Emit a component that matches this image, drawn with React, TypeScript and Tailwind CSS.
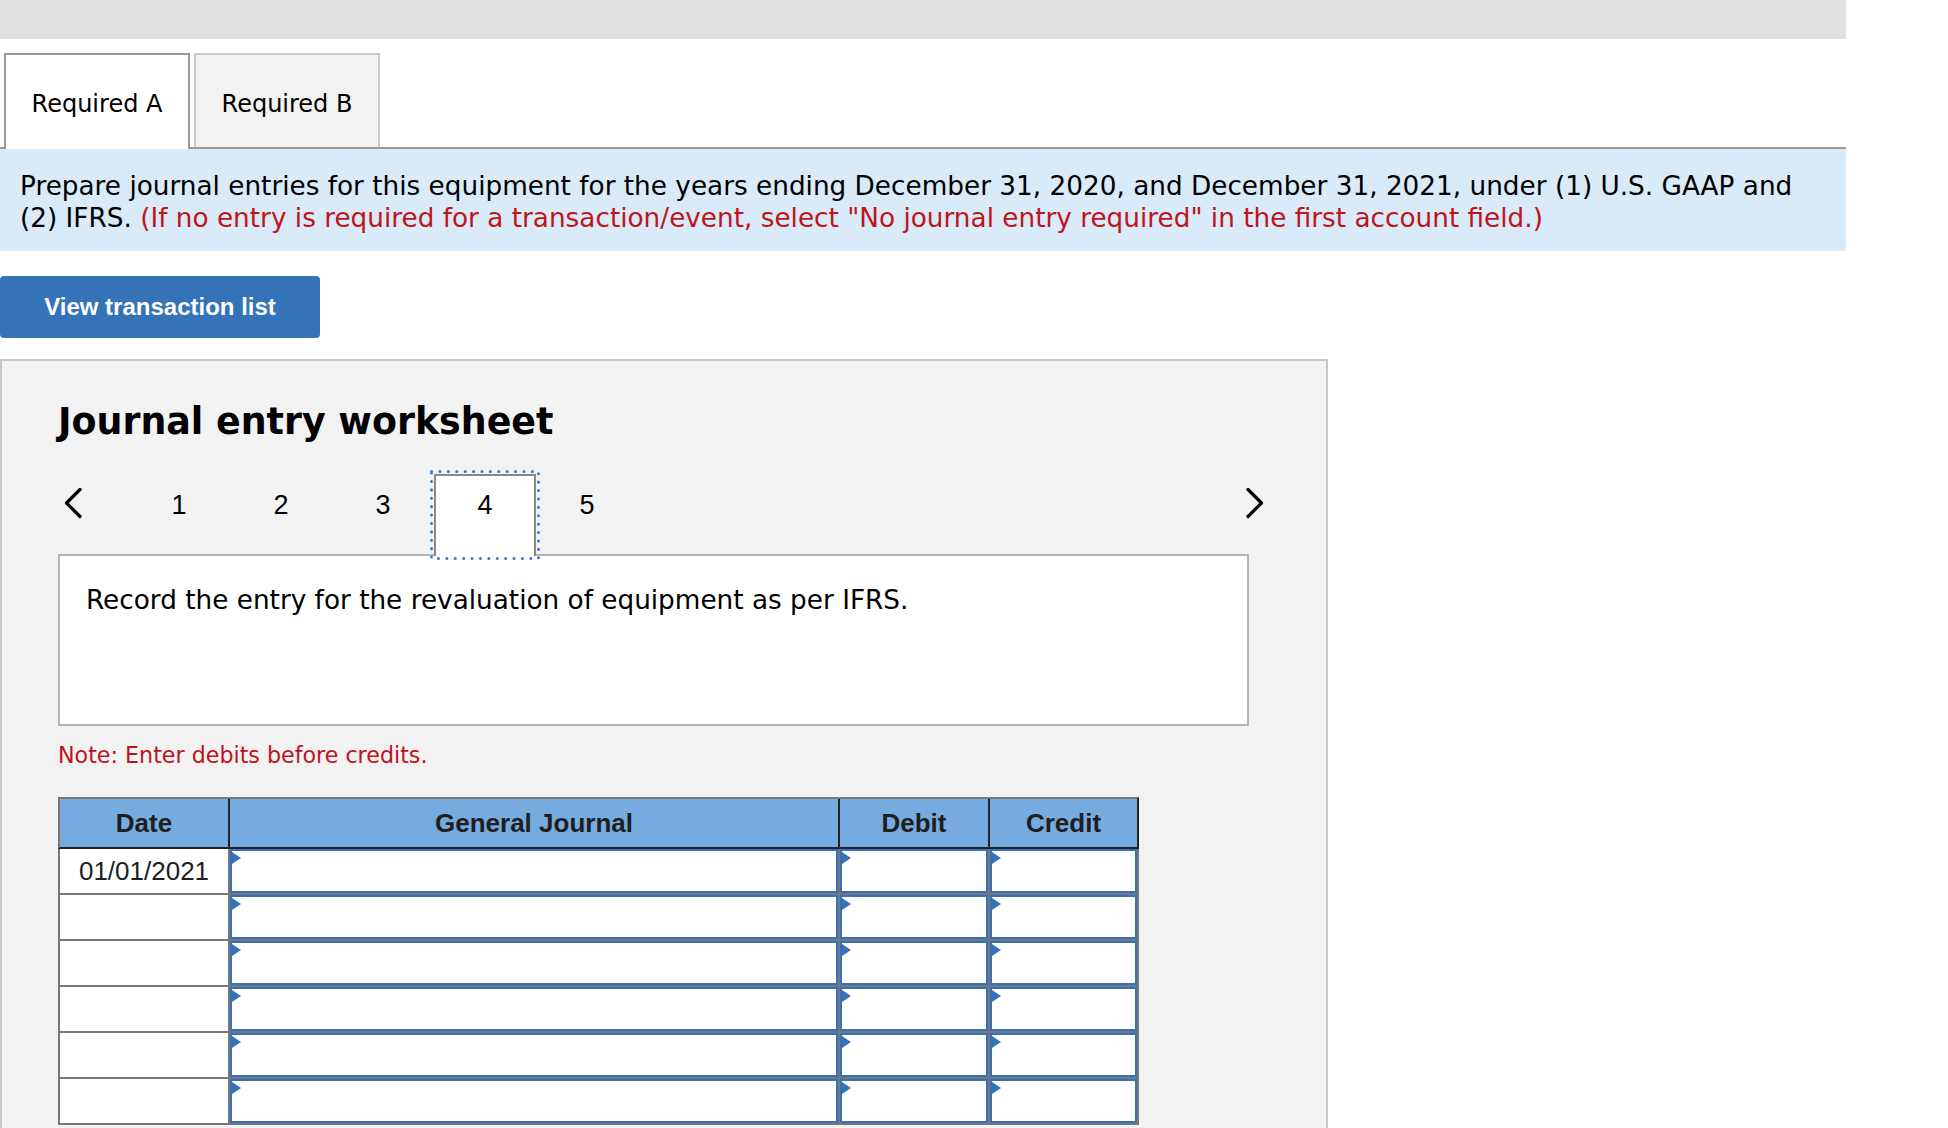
const verdana = "font-['DejaVu_Sans',Verdana,sans-serif]";
const arial = "font-['Liberation_Sans',Arial,sans-serif]";

const steps = [1, 2, 3, 4, 5];
const rows = ["01/01/2021", "", "", "", "", ""];

function Chevron({ dir }: { dir: "left" | "right" }) {
  const d = dir === "left" ? "M18 2.5 L4.5 16 L18 29.5" : "M4 2.5 L17.5 16 L4 29.5";
  return (
    <svg width="22" height="32" viewBox="0 0 22 32" fill="none" className="shrink-0">
      <path d={d} stroke="#000" strokeWidth="3.2" strokeLinecap="round" strokeLinejoin="round" />
    </svg>
  );
}

function EntryInput() {
  return (
    <div className="relative h-full border-2 border-[#3572b8] bg-white">
      <span className="absolute left-0 top-[1px] h-0 w-0 border-y-[6px] border-l-[9px] border-y-transparent border-l-[#3572b8]" />
    </div>
  );
}

function StepTabs() {
  return (
    <div className="flex h-[80px] w-[1208px] items-start">
      <div className="w-[70px] pl-[4px] pt-[13px]">
        <Chevron dir="left" />
      </div>
      {steps.map((n) =>
        n === 4 ? (
          <div key={n} className="relative z-10 -mb-[2px] h-[82px] w-[102px]">
            <div className={`h-full border-2 border-b-0 border-[#8a8a8a] bg-white pt-[9px] text-center text-[27px] leading-[40px] text-black ${arial}`}>
              {n}
            </div>
            {/* focus ring around the active step */}
            <svg className="pointer-events-none absolute -left-[4px] -top-[4px]" width="110" height="90" viewBox="0 0 110 90" fill="none">
              <rect x="1.5" y="1.5" width="107" height="87" stroke="#3b7ccc" strokeWidth="3" strokeDasharray="0.1 8.3" strokeLinecap="round" />
            </svg>
          </div>
        ) : (
          <div key={n} className={`w-[102px] pt-[11px] text-center text-[27px] leading-[40px] text-black ${arial}`}>
            {n}
          </div>
        )
      )}
      <div className="flex-1" />
      <div className="pt-[13px]">
        <Chevron dir="right" />
      </div>
    </div>
  );
}

function JournalTable() {
  const cols = "grid grid-cols-[168px_608px_148px_147px]";
  return (
    <div className="w-[1081px]">
      <div className={`${cols} gap-x-[2px] border-2 border-l-[#777] border-t-[#777] border-r-[#222] border-b-[#222] bg-[#222] ${arial}`}>
        {["Date", "General Journal", "Debit", "Credit"].map((h) => (
          <div key={h} className="flex h-[48px] items-center justify-center bg-[#76abe0] text-[26px] font-bold text-[#1e1e1e]">
            {h}
          </div>
        ))}
      </div>
      <div className={`${cols} gap-[2px] bg-[#777] px-[2px] pb-[2px]`}>
        {rows.map((date, i) => (
          <div key={i} className="contents">
            <div className={`flex h-[44px] items-center justify-center bg-white text-[26px] text-[#1e1e1e] ${arial}`}>
              {date}
            </div>
            <EntryInput />
            <EntryInput />
            <EntryInput />
          </div>
        ))}
      </div>
    </div>
  );
}

export default function App() {
  return (
    <div className={`min-h-screen bg-white text-black ${verdana}`}>
      <div className="w-[1846px]">
        <div className="h-[39px] bg-[#e0e0e0]" />

        <div className="mt-[14px] flex h-[96px] items-start gap-[4px] border-b-2 border-[#999] pl-[4px]">
          <button className="relative z-10 h-[96px] w-[186px] border-2 border-b-0 border-[#999] bg-white pt-[4px] text-[24px] text-black">
            Required A
          </button>
          <button className="h-[94px] w-[186px] border-2 border-b-0 border-[#c8c8c8] bg-[#f2f2f2] pt-[6px] text-[24px] text-black">
            Required B
          </button>
        </div>

        <div className="bg-[#d9eaf8] px-[20px] pb-[17px] pt-[21px] text-[26.3px] leading-[32px] text-black">
          Prepare journal entries for this equipment for the years ending December 31, 2020, and December 31, 2021, under (1) U.S. GAAP and
          <br />
          (2) IFRS.{" "}
          <span className="text-[#c0141c]">
            (If no entry is required for a transaction/event, select "No journal entry required" in the first account field.)
          </span>
        </div>

        <button className={`mt-[25px] h-[62px] w-[320px] rounded-[4px] bg-[#3473b7] text-[24px] font-bold text-white ${arial}`}>
          View transaction list
        </button>
      </div>

      <section className="mt-[21px] w-[1328px] border-2 border-[#c8c8c8] bg-[#f2f2f2] px-[56px] pb-[60px] pt-[41px]">
        <h2 className="text-[36.4px] font-bold leading-[40px] text-black">Journal entry worksheet</h2>

        <div className="mt-[32px]">
          <StepTabs />
          <div className="h-[172px] w-[1191px] border-2 border-[#b4b4b4] bg-white pl-[26px] pt-[28px] text-[26.3px] leading-[32px] text-black">
            Record the entry for the revaluation of equipment as per IFRS.
          </div>
        </div>

        <p className="mt-[14px] text-[22.2px] leading-[30px] text-[#c0141c]">Note: Enter debits before credits.</p>

        <div className="mt-[27px]">
          <JournalTable />
        </div>
      </section>
    </div>
  );
}
